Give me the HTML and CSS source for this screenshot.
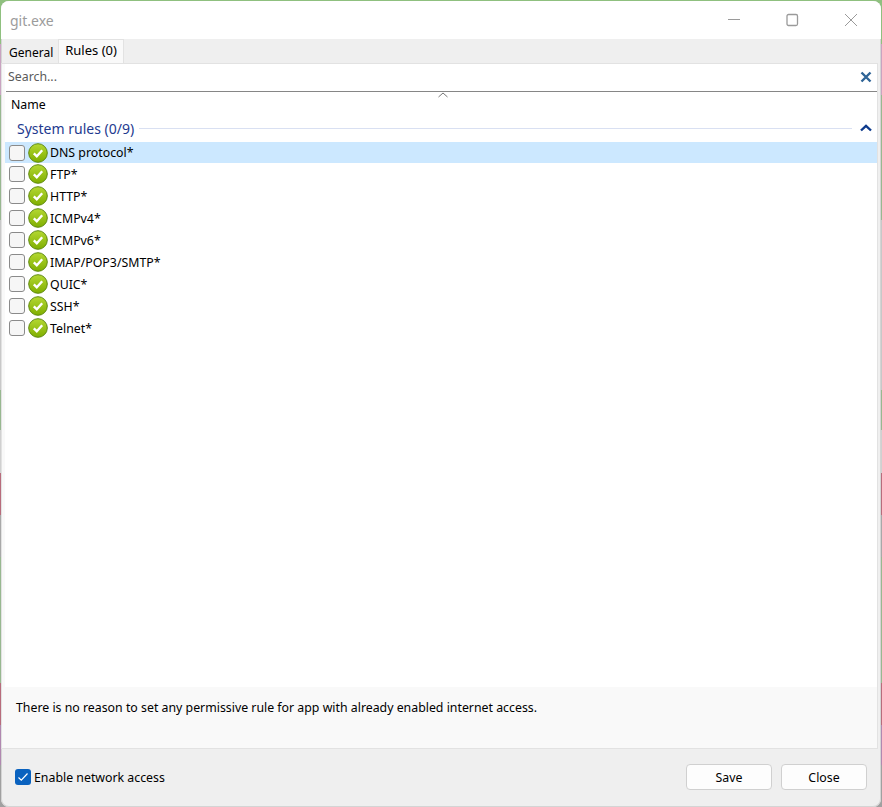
FILE: index.html
```html
<!DOCTYPE html>
<html lang="en">
<head>
<meta charset="utf-8">
<title>git.exe</title>
<link rel="stylesheet" href="styles.css">
</head>
<body>
<div class="window">
  <header class="titlebar">
    <span class="title">git.exe</span>
    <div class="caps">
      <svg class="cap" width="14" height="14" viewBox="0 0 14 14"><path d="M0 6.500h12" stroke="#9a9a9a" fill="none"/></svg>
      <svg class="cap" width="14" height="14" viewBox="0 0 14 14"><rect x="1" y="1.500" width="10.500" height="11" rx="1.500" stroke="#9a9a9a" stroke-width="1.300" fill="none"/></svg>
      <svg class="cap" width="14" height="14" viewBox="0 0 14 14"><path d="M1 1l12 12M13 1L1 13" stroke="#9a9a9a" fill="none"/></svg>
    </div>
  </header>
  <nav class="tabs">
    <span class="tab">General</span>
    <span class="tab active">Rules (0)</span>
  </nav>
  <div class="page">
    <main class="panel">
      <div class="search">
        <span class="placeholder">Search...</span>
        <svg width="12" height="12" viewBox="0 0 12 12"><path d="M1.500 1.500l9 9M10.500 1.500l-9 9" stroke="#2f6496" stroke-width="2.400" fill="none"/></svg>
      </div>
      <div class="colhead">
        <span>Name</span>
        <svg class="sort" width="10" height="6" viewBox="0 0 10 6"><path d="M.5 5L5 1l4.500 4" stroke="#777" fill="none"/></svg>
      </div>
      <div class="group">
        <span class="gname">System rules (0/9)</span>
        <span class="gline"></span>
        <svg width="12" height="8" viewBox="0 0 12 8"><path d="M1 6.500L6 1.800l5 4.700" stroke="#0d3a8c" stroke-width="2.400" fill="none"/></svg>
      </div>
      <ul class="rules">
        <li class="rule sel"><span class="box"></span><svg class="ok" width="20" height="20" viewBox="0 0 20 20"><use href="#ok"/></svg><span>DNS protocol*</span></li>
        <li class="rule"><span class="box"></span><svg class="ok" width="20" height="20" viewBox="0 0 20 20"><use href="#ok"/></svg><span>FTP*</span></li>
        <li class="rule"><span class="box"></span><svg class="ok" width="20" height="20" viewBox="0 0 20 20"><use href="#ok"/></svg><span>HTTP*</span></li>
        <li class="rule"><span class="box"></span><svg class="ok" width="20" height="20" viewBox="0 0 20 20"><use href="#ok"/></svg><span>ICMPv4*</span></li>
        <li class="rule"><span class="box"></span><svg class="ok" width="20" height="20" viewBox="0 0 20 20"><use href="#ok"/></svg><span>ICMPv6*</span></li>
        <li class="rule"><span class="box"></span><svg class="ok" width="20" height="20" viewBox="0 0 20 20"><use href="#ok"/></svg><span>IMAP/POP3/SMTP*</span></li>
        <li class="rule"><span class="box"></span><svg class="ok" width="20" height="20" viewBox="0 0 20 20"><use href="#ok"/></svg><span>QUIC*</span></li>
        <li class="rule"><span class="box"></span><svg class="ok" width="20" height="20" viewBox="0 0 20 20"><use href="#ok"/></svg><span>SSH*</span></li>
        <li class="rule"><span class="box"></span><svg class="ok" width="20" height="20" viewBox="0 0 20 20"><use href="#ok"/></svg><span>Telnet*</span></li>
      </ul>
    </main>
    <div class="hint">There is no reason to set any permissive rule for app with already enabled internet access.</div>
  </div>
  <footer class="footer">
    <label class="enable">
      <span class="cbox"><svg width="12" height="10" viewBox="0 0 12 10"><path d="M1.500 5.500L4.300 8.200 10.500 1.500" stroke="#fff" stroke-width="1.200" fill="none"/></svg></span>
      <span>Enable network access</span>
    </label>
    <div class="btns">
      <button class="btn">Save</button>
      <button class="btn">Close</button>
    </div>
  </footer>
</div>
<svg class="defs" width="0" height="0">
  <defs>
    <linearGradient id="okg" x1="0" y1="0" x2="0" y2="1">
      <stop offset="0" stop-color="#b4d832"/>
      <stop offset="1" stop-color="#7fae00"/>
    </linearGradient>
    <g id="ok">
      <circle cx="10" cy="10" r="9.300" fill="url(#okg)" stroke="#5f8a10" stroke-width="1"/>
      <path d="M5.800 10.300l3 3 5.400-6" stroke="#fff" stroke-width="2.400" fill="none"/>
    </g>
  </defs>
</svg>
</body>
</html>
```
FILE: styles.css
```css
* { box-sizing: border-box; }
html, body { margin: 0; height: 100%; }
body {
  width: 882px;
  height: 807px;
  overflow: hidden;
  padding: 1px 1px 0 1px;
  background: linear-gradient(to bottom, #8fc07f 0 44px, #c9a3c0 44px 95px, #98b890 95px 220px, #c8c8c8 220px 390px, #98b890 390px 430px, #d0d0d0 430px 473px, #b86c7c 473px 515px, #a8a8a8 515px 557px, #98b890 557px 683px, #b86c7c 683px 725px, #b088b0 725px 765px, #a0a0a0 765px);
  font: 12.33px "Noto Sans", sans-serif;
  color: #000;
}
.window {
  height: 806px;
  display: flex;
  flex-direction: column;
  background: #efefef;
  border-radius: 8px;
  overflow: hidden;
  box-shadow: inset 0 0 0 1px #d4d4d4;
}
.titlebar {
  height: 38px;
  flex: none;
  background: #fff;
  display: flex;
  align-items: center;
  justify-content: space-between;
  padding-left: 9px;
}
.title { font-size: 14px; color: #9c9c9c; }
.caps { display: flex; gap: 44px; padding-right: 23px; }
.tabs {
  height: 24px;
  flex: none;
  display: flex;
  align-items: flex-end;
  padding-left: 3px;
}
.tab { padding: 0 5px 2px 5px; height: 22px; line-height: 23px; font-size: 12px; }
.tab.active {
  height: 24px;
  padding: 0 6px;
  line-height: 21px;
  font-size: 13px;
  background: #f9f9f9;
  border: 1px solid #e2e2e2;
  border-bottom: 0;
}
.page {
  flex: 1;
  min-height: 0;
  display: flex;
  flex-direction: column;
  margin-right: 3px;
  background: #f9f9f9;
  border: 1px solid #e2e2e2;
}
.panel {
  flex: 1;
  min-height: 0;
  margin-left: 3px;
  background: #fff;
}
.search {
  height: 28px;
  margin-left: 1px;
  display: flex;
  align-items: center;
  justify-content: space-between;
  padding: 0 5px 1px 2px;
  border-bottom: 1px solid #868686;
  color: #5a5a5a;
}
.placeholder { margin-bottom: 2px; }
.colhead {
  position: relative;
  height: 25px;
  display: flex;
  align-items: center;
  padding-left: 6px;
}
.sort { position: absolute; left: 433px; top: 0; }
.group {
  height: 25px;
  display: flex;
  align-items: center;
  padding: 0 2px 3px 12px;
  color: #1e3a8f;
  font-size: 14px;
}
.gline { flex: 1; height: 1px; background: #d9e0f2; margin: 0 5px; }
.group svg { margin: 0 3px; }
.rules { list-style: none; margin: 0; padding: 0; }
.rule { height: 22px; display: flex; align-items: center; padding-left: 4px; }
.rule.sel { height: 21px; background: #cce8ff; }
.box {
  width: 16px;
  height: 16px;
  border: 1px solid #8a8a8a;
  border-radius: 3px;
  background: #f6f6f6;
}
.ok { margin-left: 3px; margin-right: 2px; }
.hint {
  height: 61px;
  flex: none;
  padding: 12px 14px 0;
}
.footer {
  height: 58px;
  flex: none;
  display: flex;
  align-items: center;
  justify-content: space-between;
  padding: 0 14px 2px 14px;
}
.enable { display: flex; align-items: center; gap: 3px; }
.cbox {
  width: 16px;
  height: 16px;
  border-radius: 3px;
  background: #0a62bf;
  display: flex;
  align-items: center;
  justify-content: center;
}
.btns { display: flex; gap: 9px; }
.btn {
  width: 86px;
  height: 26px;
  padding: 0;
  font: inherit;
  background: #fdfdfd;
  border: 1px solid #d0d0d0;
  border-radius: 4px;
  color: #000;
}
.defs { position: absolute; }
```
